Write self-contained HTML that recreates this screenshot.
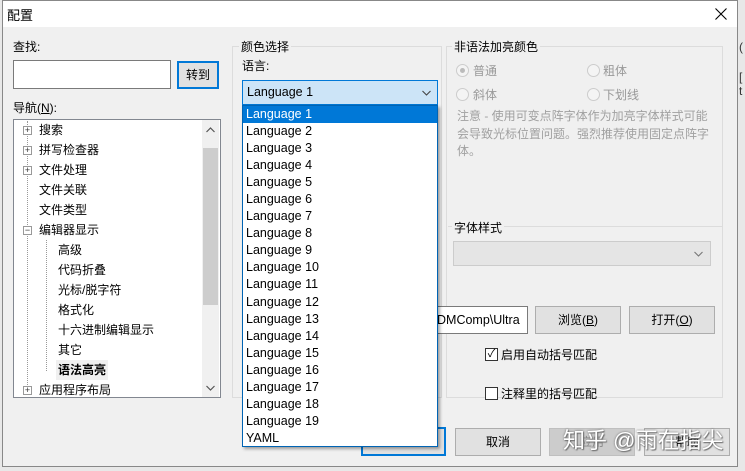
<!DOCTYPE html>
<html><head><meta charset="utf-8"><style>
*{box-sizing:border-box;margin:0;padding:0}
body{width:745px;height:471px;position:relative;overflow:hidden;background:#fff;font-family:"Liberation Sans","Microsoft YaHei","Noto Sans CJK SC",sans-serif;font-size:12px;color:#000}
.a{position:absolute;white-space:nowrap}
.btn{position:absolute;background:#e1e1e1;border:1px solid #adadad;text-align:center;line-height:26px}
.t{position:absolute;left:0;white-space:nowrap;line-height:20px}
.pl{position:absolute;width:9px;height:9px;border:1px solid #999;background:#fff;font-size:9px;line-height:7px;text-align:center;color:#333}
.li{height:17.05px;line-height:17px;padding-left:3px;font-size:12.5px}
.rad{position:absolute;width:13px;height:13px;border:1px solid #ccc;border-radius:50%;background:#f4f4f4}
</style></head><body>
<div class="a" style="left:0;top:0;width:745px;height:471px;background:#e8e8e8"></div>
<div class="a" style="left:2px;top:0;width:736px;height:467px;background:#f0f0f0;border:1px solid #888"></div>
<div class="a" style="left:3px;top:1px;width:734px;height:26px;background:#fff"></div>
<div class="a" style="left:7px;top:5px;font-size:13px">配置</div>
<svg class="a" style="left:715px;top:8px" width="12" height="12"><path d="M0.5 0.5L11.5 11.5M11.5 0.5L0.5 11.5" stroke="#000" stroke-width="1.1"/></svg>
<div class="a" style="left:739px;top:40px;font-size:12px;color:#333">(</div>
<div class="a" style="left:739px;top:70px;font-size:12px;color:#333">[<br>t</div>

<div class="a" style="left:13px;top:38px">查找:</div>
<div class="a" style="left:13px;top:60px;width:158px;height:29px;background:#fff;border:1px solid #7a7a7a"></div>
<div class="btn" style="left:177px;top:61px;width:42px;height:28px;border:2px solid #0078d7;line-height:24px">转到</div>
<div class="a" style="left:13px;top:99px">导航(<u>N</u>):</div>
<div class="a" style="left:13px;top:119px;width:208px;height:279px;background:#fff;border:1px solid #828790"></div>
<div class="a" style="left:202px;top:120px;width:17px;height:277px;background:#f0f0f0"></div>
<div class="a" style="left:203px;top:148px;width:15px;height:157px;background:#cdcdcd"></div>
<svg class="a" style="left:206px;top:127px" width="9" height="6"><path d="M0.5 5L4.5 1L8.5 5" stroke="#555" fill="none" stroke-width="1.2"/></svg>
<svg class="a" style="left:206px;top:385px" width="9" height="6"><path d="M0.5 1L4.5 5L8.5 1" stroke="#555" fill="none" stroke-width="1.2"/></svg>
<div class="a" style="left:27px;top:121px;height:272px;border-left:1px dotted #999"></div>
<div class="a" style="left:46px;top:240px;height:131px;border-left:1px dotted #999"></div>
<div class="a" style="left:19px;top:120px;width:180px;height:280px">
<div class="pl" style="left:4px;top:6px">+</div><div class="pl" style="left:4px;top:26px">+</div><div class="pl" style="left:4px;top:46px">+</div><div class="pl" style="left:4px;top:106px">−</div><div class="pl" style="left:4px;top:266px">+</div>
<div class="t" style="left:20px;top:0">搜索</div>
<div class="t" style="left:20px;top:20px">拼写检查器</div>
<div class="t" style="left:20px;top:40px">文件处理</div>
<div class="t" style="left:20px;top:60px">文件关联</div>
<div class="t" style="left:20px;top:80px">文件类型</div>
<div class="t" style="left:20px;top:100px">编辑器显示</div>
<div class="t" style="left:39px;top:120px">高级</div>
<div class="t" style="left:39px;top:140px">代码折叠</div>
<div class="t" style="left:39px;top:160px">光标/脱字符</div>
<div class="t" style="left:39px;top:180px">格式化</div>
<div class="t" style="left:39px;top:200px">十六进制编辑显示</div>
<div class="t" style="left:39px;top:220px">其它</div>
<div class="t" style="left:37px;top:240px;font-weight:bold;background:#f0f0f0;padding:0 2px">语法高亮</div>
<div class="t" style="left:20px;top:260px">应用程序布局</div>
</div>

<div class="a" style="left:232px;top:46px;width:210px;height:352px;border:1px solid #dcdcdc"></div>
<div class="a" style="left:239px;top:38px;background:#f0f0f0;padding:0 2px">颜色选择</div>
<div class="a" style="left:242px;top:57px">语言:</div>
<div class="a" style="left:242px;top:80px;width:196px;height:25px;background:#cce4f7;border:1px solid #0078d7;padding-left:4px;line-height:23px;font-size:12.5px">Language 1<svg style="position:absolute;right:6px;top:9px" width="9" height="6"><path d="M0.5 1L4.5 5L8.5 1" stroke="#444" fill="none" stroke-width="1.1"/></svg></div>

<div class="a" style="left:446px;top:46px;width:277px;height:352px;border:1px solid #dcdcdc"></div>
<div class="a" style="left:452px;top:38px;background:#f0f0f0;padding:0 2px">非语法加亮颜色</div>
<div class="rad" style="left:456px;top:64px"><div style="margin:3px;width:5px;height:5px;border-radius:50%;background:#bbb"></div></div>
<div class="a" style="left:473px;top:62px;color:#999">普通</div>
<div class="rad" style="left:587px;top:64px"></div><div class="a" style="left:603px;top:62px;color:#999">粗体</div>
<div class="rad" style="left:456px;top:88px"></div><div class="a" style="left:473px;top:86px;color:#999">斜体</div>
<div class="rad" style="left:587px;top:88px"></div><div class="a" style="left:603px;top:86px;color:#999">下划线</div>
<div class="a" style="left:457px;top:108px;color:#a0a0a0;line-height:17.5px">注意 - 使用可变点阵字体作为加亮字体样式可能<br>会导致光标位置问题。强烈推荐使用固定点阵字<br>体。</div>
<div class="a" style="left:448px;top:226px;width:274px;border-top:1px solid #dcdcdc"></div>
<div class="a" style="left:452px;top:219px;background:#f0f0f0;padding:0 2px">字体样式</div>
<div class="a" style="left:453px;top:241px;width:258px;height:25px;background:#e5e5e5;border:1px solid #ccc"><svg style="position:absolute;right:7px;top:9px" width="9" height="6"><path d="M0.5 1L4.5 5L8.5 1" stroke="#777" fill="none" stroke-width="1.1"/></svg></div>

<div class="a" style="left:400px;top:306px;width:128px;height:28px;background:#fff;border:1px solid #7a7a7a;padding-left:36px;line-height:26px;font-size:12.5px;overflow:hidden">DMComp\Ultra</div>
<div class="btn" style="left:535px;top:306px;width:86px;height:28px">浏览(<u>B</u>)</div>
<div class="btn" style="left:629px;top:306px;width:86px;height:28px">打开(<u>O</u>)</div>
<div class="a" style="left:485px;top:348px;width:13px;height:13px;border:1px solid #333;background:#fff;font-size:11px;line-height:11px;text-align:center">✓</div>
<div class="a" style="left:501px;top:346px">启用自动括号匹配</div>
<div class="a" style="left:485px;top:387px;width:13px;height:13px;border:1px solid #333;background:#fff"></div>
<div class="a" style="left:501px;top:385px">注释里的括号匹配</div>

<div class="btn" style="left:361px;top:427px;width:85px;height:29px;border:2px solid #0078d7"></div>
<div class="btn" style="left:455px;top:428px;width:86px;height:28px">取消</div>
<div class="btn" style="left:549px;top:428px;width:86px;height:28px;background:#ccc;border-color:#bfbfbf;color:#888">应用</div>
<div class="btn" style="left:644px;top:428px;width:86px;height:28px">帮助</div>
<div class="a" style="left:563px;top:423px;font-size:22px;color:#fff;text-shadow:0 0 2px #666,1px 1px 1px #777">知乎 @雨在指尖</div>

<div class="a" style="left:242px;top:105px;width:196px;height:342px;background:#fff;border:1px solid #0064b4;box-shadow:2px 2px 3px rgba(0,0,0,.35)">
<div class="li" style="background:#0078d7;color:#fff">Language 1</div>
<div class="li">Language 2</div><div class="li">Language 3</div><div class="li">Language 4</div><div class="li">Language 5</div><div class="li">Language 6</div><div class="li">Language 7</div><div class="li">Language 8</div><div class="li">Language 9</div><div class="li">Language 10</div><div class="li">Language 11</div><div class="li">Language 12</div><div class="li">Language 13</div><div class="li">Language 14</div><div class="li">Language 15</div><div class="li">Language 16</div><div class="li">Language 17</div><div class="li">Language 18</div><div class="li">Language 19</div><div class="li">YAML</div>
</div>
</body></html>
